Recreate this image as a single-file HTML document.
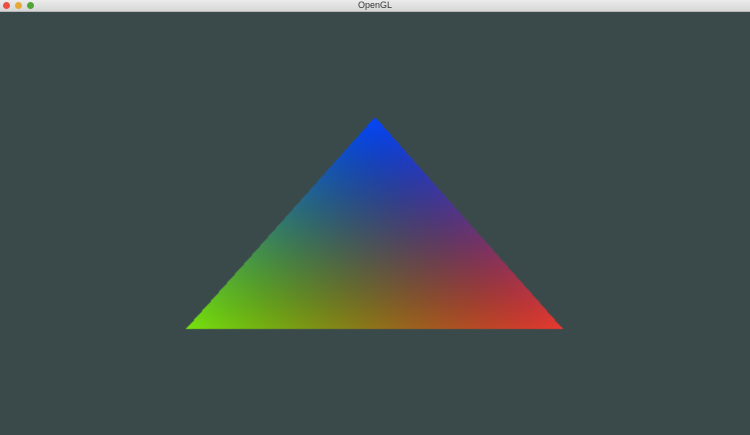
<!DOCTYPE html>
<html><head><meta charset="utf-8">
<style>
html,body{margin:0;padding:0;width:750px;height:435px;overflow:hidden;background:#3a4a4b;}
#bar{position:absolute;left:0;top:0;width:750px;height:11px;background:linear-gradient(#ececec,#d6d6d6);border-bottom:1px solid #b8b8b8;}
#bar span{position:absolute;top:0;left:0;width:750px;text-align:center;font:9px/11px "Liberation Sans",sans-serif;color:#333;}
.d{position:absolute;top:2px;width:7px;height:7px;border-radius:50%;}
canvas{position:absolute;left:0;top:0;}
</style></head><body>
<canvas id="c" width="750" height="435"></canvas>
<div id="bar"><div class="d" style="left:3px;background:#ec4f45"></div><div class="d" style="left:15px;background:#e5a935"></div><div class="d" style="left:27px;background:#4fa535"></div><span>OpenGL</span></div>
<script>
var c=document.getElementById('c'),g=c.getContext('2d');
g.fillStyle='#3a4a4b';g.fillRect(0,0,750,435);
var im=g.getImageData(0,0,750,435),d=im.data;
var A=[375,117],B=[186,329],C=[563,329];
var cA=[5,70,250],cB=[120,228,15],cC=[232,58,50];
var den=(B[1]-C[1])*(A[0]-C[0])+(C[0]-B[0])*(A[1]-C[1]);
var p=1.3;
for(var y=110;y<335;y++)for(var x=180;x<570;x++){
var px=x+.5,py=y+.5;
var a=((B[1]-C[1])*(px-C[0])+(C[0]-B[0])*(py-C[1]))/den;
var b=((C[1]-A[1])*(px-C[0])+(A[0]-C[0])*(py-C[1]))/den;
var e=1-a-b;
if(a<0||b<0||e<0)continue;
var wa=Math.pow(a,p),wb=Math.pow(b,p),wc=Math.pow(e,p);
var i=(y*750+x)*4;
for(var k=0;k<3;k++)d[i+k]=wa*cA[k]+wb*cB[k]+wc*cC[k];
}
g.putImageData(im,0,0);
</script>
</body></html>
